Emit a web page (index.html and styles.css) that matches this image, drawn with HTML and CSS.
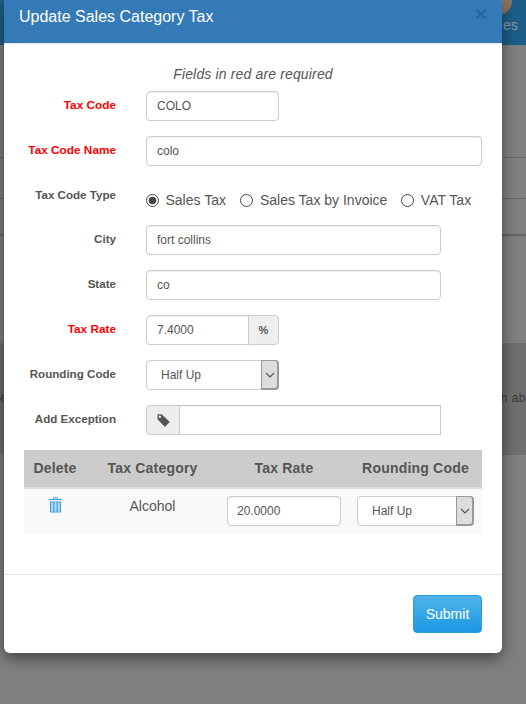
FILE: index.html
```html
<!DOCTYPE html>
<html lang="en">
<head>
    <meta charset="UTF-8">
    <title>Update Sales Category Tax</title>
    <link rel="stylesheet" href="styles.css">
</head>
<body>
    <div class="page">
        <div class="topbar">
            <span class="avatar"></span>
            <span class="topbar-text">es</span>
        </div>
        <div class="page-row page-row-a"></div>
        <div class="page-row page-row-b"></div>
        <div class="page-row page-row-c"></div>
        <div class="page-gap"></div>
        <div class="page-band">
            <span>e</span>
            <span>on ab</span>
        </div>
    </div>

    <div class="modal">
        <div class="modal-header">
            <h2>Update Sales Category Tax</h2>
            <span class="close">&times;</span>
        </div>
        <div class="modal-body">
            <p class="note">Fields in red are required</p>

            <div class="form-row">
                <label class="required">Tax Code</label>
                <input class="field field-short" type="text" value="COLO">
            </div>
            <div class="form-row">
                <label class="required">Tax Code Name</label>
                <input class="field field-full" type="text" value="colo">
            </div>
            <div class="form-row form-row-radios">
                <label>Tax Code Type</label>
                <div class="radios">
                    <span class="radio-item radio-sales"><input type="radio" name="type" checked>Sales Tax</span>
                    <span class="radio-item radio-invoice"><input type="radio" name="type">Sales Tax by Invoice</span>
                    <span class="radio-item"><input type="radio" name="type">VAT Tax</span>
                </div>
            </div>
            <div class="form-row">
                <label>City</label>
                <input class="field field-long" type="text" value="fort collins">
            </div>
            <div class="form-row">
                <label>State</label>
                <input class="field field-long" type="text" value="co">
            </div>
            <div class="form-row">
                <label class="required">Tax Rate</label>
                <div class="input-group field-short">
                    <input class="field" type="text" value="7.4000">
                    <span class="addon addon-right">%</span>
                </div>
            </div>
            <div class="form-row">
                <label>Rounding Code</label>
                <div class="select-wrap field-short">
                    <select class="select">
                        <option>Half Up</option>
                    </select>
                    <span class="select-arrow">
                        <svg width="10" height="6" viewBox="0 0 10 6"><path d="M1 1l4 4 4-4" fill="none" stroke="#555" stroke-width="1.2"/></svg>
                    </span>
                </div>
            </div>
            <div class="form-row">
                <label>Add Exception</label>
                <div class="input-group field-long">
                    <span class="addon addon-left">
                        <svg width="13" height="13" viewBox="0 0 13 13"><path d="M0.5 3V0.8Q0.5 0.3 1 0.3H4.6L12.4 7.6Q12.8 8 12.4 8.4L8.2 12.6Q7.8 13 7.4 12.6L0.5 5.2ZM2.9 1.6A1.2 1.2 0 1 0 2.9 4A1.2 1.2 0 1 0 2.9 1.6Z" fill="#555" fill-rule="evenodd"/></svg>
                    </span>
                    <input class="field" type="text">
                </div>
            </div>

            <table class="tax-table">
                <colgroup>
                    <col class="col-delete">
                    <col class="col-category">
                    <col class="col-rate">
                    <col class="col-rounding">
                </colgroup>
                <thead>
                    <tr>
                        <th>Delete</th>
                        <th>Tax Category</th>
                        <th>Tax Rate</th>
                        <th>Rounding Code</th>
                    </tr>
                </thead>
                <tbody>
                    <tr>
                        <td>
                            <svg class="trash" width="13" height="16" viewBox="0 0 13 16">
                                <path d="M4.5 2V0.8h4V2" fill="none" stroke="#4aa8e8" stroke-width="1"/>
                                <rect x="0" y="2" width="13" height="1" fill="#3a9fe4"/>
                                <path d="M1 4.5h11V15.5H1zM2.5 5.5v9h1.6v-9zM5.7 5.5v9h1.6v-9zM8.9 5.5v9h1.6v-9z" fill="#3a9fe4" fill-rule="evenodd"/>
                                <path d="M2.5 5.5h1.6v9H2.5zM5.7 5.5h1.6v9H5.7zM8.9 5.5h1.6v9H8.9z" fill="#b5dcf6"/>
                            </svg>
                        </td>
                        <td class="cell-text">Alcohol</td>
                        <td><input class="field table-input" type="text" value="20.0000"></td>
                        <td>
                            <div class="select-wrap table-select">
                                <select class="select">
                                    <option>Half Up</option>
                                </select>
                                <span class="select-arrow">
                                    <svg width="10" height="6" viewBox="0 0 10 6"><path d="M1 1l4 4 4-4" fill="none" stroke="#555" stroke-width="1.2"/></svg>
                                </span>
                            </div>
                        </td>
                    </tr>
                </tbody>
            </table>
        </div>
        <div class="modal-footer">
            <button class="submit">Submit</button>
        </div>
    </div>
</body>
</html>
```

FILE: styles.css
```css
* {
    box-sizing: border-box;
}
body {
    font-family: "Liberation Sans", Arial, sans-serif;
    margin: 0;
    height: 704px;
    overflow: hidden;
    background-color: #808080;
    color: #555;
    position: relative;
}

/* page behind the modal */
.topbar {
    height: 45px;
    background-color: #1d5e88;
    position: relative;
    overflow: hidden;
}
.avatar {
    position: absolute;
    left: 484px;
    top: -13px;
    width: 28px;
    height: 28px;
    border-radius: 50%;
    background-color: #8a7660;
}
.topbar-text {
    position: absolute;
    left: 503px;
    top: 17px;
    font-size: 14px;
    color: #8b98a3;
}
.page-row {
    border-bottom: 1px solid #666;
}
.page-row-a {
    height: 113px;
}
.page-row-b {
    height: 41px;
}
.page-row-c {
    height: 37px;
    border-bottom: 2px solid #666;
}
.page-gap {
    height: 107px;
}
.page-band {
    height: 112px;
    padding-top: 48px;
    background-color: #6f6f6f;
    color: #3a3a3a;
    font-size: 12px;
    letter-spacing: 0.5px;
    display: flex;
    justify-content: space-between;
}

/* modal */
.modal {
    position: absolute;
    left: 4px;
    top: 0;
    width: 498px;
    height: 653px;
    background-color: #fff;
    border-radius: 0 0 6px 6px;
    box-shadow: 0 5px 15px rgba(0,0,0,0.5);
}
.modal-header {
    height: 44px;
    background-color: #337ab7;
    border-bottom: 1px solid #e5e5e5;
    padding-left: 15px;
    display: flex;
    justify-content: space-between;
}
.modal-header h2 {
    margin: 0;
    font-size: 16px;
    font-weight: normal;
    line-height: 33px;
    color: #fff;
}
.close {
    font-size: 21px;
    font-weight: bold;
    line-height: 28px;
    margin-right: 15px;
    color: #2a669b;
}
.modal-body {
    padding: 20px 20px 0;
}
.note {
    margin: 0 0 7px;
    font-size: 14px;
    font-style: italic;
    letter-spacing: 0.15px;
    line-height: 20px;
    text-align: center;
}
.form-row {
    display: flex;
    height: 30px;
    margin-bottom: 15px;
    margin-left: -20px;
}
.form-row-radios {
    margin-bottom: 14px;
}
.form-row label {
    width: 112px;
    margin-right: 30px;
    flex-shrink: 0;
    font-size: 11.6px;
    font-weight: bold;
    line-height: 27px;
    text-align: right;
}
.form-row label.required {
    font-size: 11.8px;
    line-height: 28px;
    color: #f00;
}
.field {
    height: 30px;
    padding: 0 10px;
    border: 1px solid #ccc;
    border-radius: 4px;
    box-shadow: inset 0 1px 1px rgba(0,0,0,0.075);
    font-family: inherit;
    font-size: 12px;
    color: #555;
}
.field-short {
    width: 133px;
}
.field-long {
    width: 295px;
}
.field-full {
    width: 336px;
}
.radios {
    display: flex;
    padding-top: 9px;
    font-size: 14px;
    line-height: 20px;
}
.radio-item {
    display: flex;
    align-items: center;
    height: 20px;
}
.radio-sales {
    margin-right: 14.5px;
}
.radio-invoice {
    margin-right: 14px;
}
.radio-item input {
    appearance: none;
    width: 13px;
    height: 13px;
    margin: 0 6.5px 0 0;
    border: 1px solid #444;
    border-radius: 50%;
    background-color: #fff;
}
.radio-item input:checked {
    background: radial-gradient(circle, #444 0, #444 3.5px, #fff 4.2px);
}
.input-group {
    display: flex;
}
.input-group .field {
    flex: 1;
    min-width: 0;
}
.addon {
    height: 30px;
    background-color: #eee;
    border: 1px solid #ccc;
    display: flex;
    align-items: center;
    justify-content: center;
    flex-shrink: 0;
}
.addon-right {
    width: 31px;
    margin-left: -1px;
    border-radius: 0 4px 4px 0;
    font-size: 11px;
    font-weight: bold;
}
.input-group .field:last-child {
    border-radius: 0 0 0 0;
}
.input-group .field:first-child {
    border-radius: 4px 0 0 4px;
}
.addon-left {
    width: 34px;
    margin-right: -1px;
    border-radius: 4px 0 0 4px;
}
.select-wrap {
    position: relative;
    height: 30px;
}
.select {
    appearance: none;
    width: 100%;
    height: 100%;
    padding: 0 14px;
    background-color: #fff;
    border: 1px solid #ccc;
    border-radius: 4px;
    font-family: inherit;
    font-size: 12px;
    color: #555;
}
.select-arrow {
    position: absolute;
    right: 0;
    top: 0;
    width: 18px;
    height: 30px;
    background-color: #ddd;
    border: 1px solid #999;
    border-width: 1px 2px 2px 1px;
    border-radius: 0 4px 4px 0;
    display: flex;
    align-items: center;
    justify-content: center;
}

/* exceptions table */
.tax-table {
    width: 458px;
    table-layout: fixed;
    border-collapse: collapse;
}
.col-delete {
    width: 62px;
}
.col-category {
    width: 133px;
}
.col-rate {
    width: 130px;
}
.col-rounding {
    width: 133px;
}
.tax-table th {
    height: 38px;
    padding: 0 0 2px;
    background-color: #ccc;
    border-bottom: 2px solid #ddd;
    font-size: 14px;
    letter-spacing: 0.2px;
    text-align: center;
}
.tax-table td {
    height: 46px;
    padding: 7px 0 7px;
    background-color: #f9f9f9;
    text-align: center;
    vertical-align: top;
}
.cell-text {
    font-size: 14px;
    line-height: 20px;
}
.trash {
    display: block;
    margin: 1px auto 0;
}
.table-input {
    width: 114px;
    display: block;
    margin: 0 auto;
    padding: 0 9px;
    text-align: left;
}
.table-select {
    width: 117px;
    margin: 0 auto;
}

.modal-footer {
    margin-top: 40px;
    padding: 20px;
    border-top: 1px solid #e5e5e5;
    display: flex;
    justify-content: flex-end;
}
.submit {
    width: 69px;
    height: 38px;
    padding: 0;
    border: 1px solid #2a9ae0;
    border-radius: 4px;
    background: linear-gradient(#4fb3ec, #1b98e2);
    color: #fff;
    font-family: inherit;
    font-size: 14px;
}
```
